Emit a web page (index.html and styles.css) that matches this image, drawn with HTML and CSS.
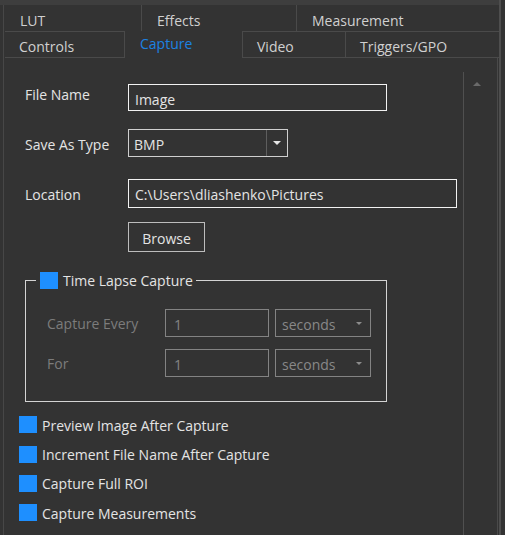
FILE: index.html
```html
<!DOCTYPE html>
<html>
<head>
<meta charset="utf-8">
<link rel="stylesheet" href="styles.css">
</head>
<body>
<div class="window">
  <div class="topbar"></div>
  <div class="body">
    <div class="tabs">
      <div class="tab-row row1">
        <div class="tab t-lut">LUT</div>
        <div class="tab t-effects">Effects</div>
        <div class="tab t-meas">Measurement</div>
      </div>
      <div class="tab-row row2">
        <div class="tab t-controls">Controls</div>
        <div class="tab t-capture">Capture</div>
        <div class="tab t-video">Video</div>
        <div class="tab t-trig">Triggers/GPO</div>
      </div>
    </div>
    <div class="panel">
      <div class="content">
        <div class="form">
          <div class="row r-name">
            <div class="label top">File Name</div>
            <div class="input in-name">Image</div>
          </div>
          <div class="row r-type">
            <div class="label">Save As Type</div>
            <div class="select sel-type"><span class="sel-text">BMP</span><span class="sel-btn"><span class="arrow"></span></span></div>
          </div>
          <div class="row r-loc">
            <div class="label">Location</div>
            <div class="input in-loc">C:\Users\dliashenko\Pictures</div>
          </div>
          <div class="row r-browse">
            <div class="label"></div>
            <div class="button">Browse</div>
          </div>
        </div>
        <fieldset class="lapse">
          <legend class="legend"><span class="check"></span><span class="ltext">Time Lapse Capture</span></legend>
          <div class="lapse-grid">
            <div class="dlabel">Capture Every</div>
            <div class="dinput">1</div>
            <div class="dselect"><span>seconds</span><span class="darrow"></span></div>
            <div class="dlabel">For</div>
            <div class="dinput">1</div>
            <div class="dselect"><span>seconds</span><span class="darrow"></span></div>
          </div>
        </fieldset>
        <div class="checks">
          <div class="citem"><span class="check"></span><span class="ctext">Preview Image After Capture</span></div>
          <div class="citem"><span class="check"></span><span class="ctext">Increment File Name After Capture</span></div>
          <div class="citem"><span class="check"></span><span class="ctext">Capture Full ROI</span></div>
          <div class="citem"><span class="check"></span><span class="ctext">Capture Measurements</span></div>
        </div>
      </div>
      <div class="scrollbar"><span class="sarrow"></span></div>
    </div>
  </div>
</div>
</body>
</html>
```
FILE: styles.css
```css
* { box-sizing: border-box; }
html, body { margin: 0; padding: 0; }
body {
  background: #333333;
  font-family: "Open Sans", "Noto Sans", sans-serif;
  font-size: 14px;
  color: #e4e4e4;
  width: 505px;
  height: 535px;
  overflow: hidden;
}
.window {
  width: 501px;
  height: 535px;
  border-right: 2px solid #4e4e4e;
  display: flex;
  flex-direction: column;
}
.topbar {
  height: 5px;
  background: #3e3e3e;
  flex: none;
}
.body {
  flex: 1;
  margin-left: 3px;
  border-left: 1px solid #474747;
  padding-left: 1px;
  display: flex;
  flex-direction: column;
  min-height: 0;
}
.tab-row { display: flex; }
.row1 { height: 26px; }
.row2 { height: 27px; }
.tab {
  color: #d0d0d0;
  display: flex;
  align-items: center;
  white-space: nowrap;
}
.row1 .tab { padding-left: 15px; padding-top: 4px; }
.t-lut { width: 136px; }
.t-effects { width: 155px; border-left: 1px solid #4a4a4a; }
.t-meas { flex: 1; border-left: 1px solid #4a4a4a; }
.row2 .tab { border-top: 1px solid #4a4a4a; border-bottom: 1px solid #4a4a4a; padding-top: 4px; }
.t-controls { width: 120px; border-right: 1px solid #4a4a4a; padding-left: 14px; }
.row2 .t-capture {
  width: 117px;
  border: none;
  color: #1c82e2;
  padding-left: 15px;
  padding-top: 0;
  padding-bottom: 2px;
}
.t-video { width: 104px; border-left: 1px solid #4a4a4a; border-right: 1px solid #4a4a4a; padding-left: 14px; }
.t-trig { flex: 1; padding-left: 14px; }

.panel {
  flex: 1;
  width: 493px;
  border-right: 1px solid #4a4a4a;
  display: flex;
  min-height: 0;
}
.content {
  flex: 1;
  padding-top: 26px;
}
.scrollbar {
  width: 34px;
  margin-top: 14px;
  border-left: 1px solid #505050;
  position: relative;
}
.sarrow {
  position: absolute;
  left: 9px;
  top: 10px;
  width: 0; height: 0;
  border-left: 4px solid transparent;
  border-right: 4px solid transparent;
  border-bottom: 4px solid #6a6a6a;
}
.form { padding-left: 20px; }
.row { display: flex; align-items: center; }
.label { width: 103px; flex: none; white-space: nowrap; padding-top: 2px; }
.label.top { align-self: flex-start; line-height: 20px; padding-top: 1px; }
.input {
  border: 1px solid #f2f2f2;
  padding-left: 6px;
  padding-top: 2px;
  display: flex;
  align-items: center;
  white-space: nowrap;
}
.in-name { width: 259px; height: 27px; padding-top: 4px; }
.r-type { margin-top: 18px; }
.select {
  width: 160px;
  height: 28px;
  border: 1px solid #cfcfcf;
  display: flex;
}
.sel-text { flex: 1; padding-left: 5px; padding-top: 2px; display: flex; align-items: center; }
.sel-btn {
  width: 21px;
  border-left: 1px solid #5e5e5e;
  display: flex;
  align-items: center;
  justify-content: center;
}
.arrow {
  width: 0; height: 0;
  border-left: 4px solid transparent;
  border-right: 4px solid transparent;
  border-top: 4px solid #e6e6e6;
}
.r-loc { margin-top: 22px; }
.in-loc { width: 329px; height: 29px; }
.r-browse { margin-top: 14px; }
.button {
  width: 77px;
  height: 30px;
  border: 1px solid #bdbdbd;
  padding-top: 2px;
  display: flex;
  align-items: center;
  justify-content: center;
}
.lapse {
  margin: 19px 0 0 20px;
  width: 362px;
  padding: 0 0 24px 21px;
  border: 1px solid #d4d4d4;
  min-width: 0;
}
.legend {
  margin-left: -11px;
  padding: 0 3px 0 4px;
  display: flex;
  align-items: center;
  gap: 5px;
  color: #e4e4e4;
  height: 18px;
}
.ltext { line-height: 16px; padding-top: 2px; }
.check {
  display: inline-block;
  width: 18px;
  height: 17px;
  background: #1e8fff;
  flex: none;
}
.lapse-grid {
  display: grid;
  grid-template-columns: 112px 104px 96px;
  column-gap: 6px;
  row-gap: 12px;
  align-items: center;
  margin-top: 20px;
}
.dlabel { color: #7c7c7c; white-space: nowrap; padding-top: 1px; }
.dinput {
  height: 28px;
  border: 1px solid #838383;
  color: #848484;
  padding-left: 8px;
  padding-top: 2px;
  display: flex;
  align-items: center;
}
.dselect {
  height: 28px;
  border: 1px solid #838383;
  color: #888888;
  padding-left: 6px;
  padding-right: 8px;
  display: flex;
  align-items: center;
  justify-content: space-between;
}
.dselect span:first-child { padding-top: 2px; }
.darrow {
  width: 0; height: 0;
  border-left: 3px solid transparent;
  border-right: 3px solid transparent;
  border-top: 3px solid #8c8c8c;
}
.checks {
  margin-top: 8px;
  padding-left: 14px;
  display: flex;
  flex-direction: column;
}
.citem {
  height: 29.4px;
  display: flex;
  align-items: center;
  gap: 5px;
  white-space: nowrap;
}
.ctext { padding-top: 1px; }
```
